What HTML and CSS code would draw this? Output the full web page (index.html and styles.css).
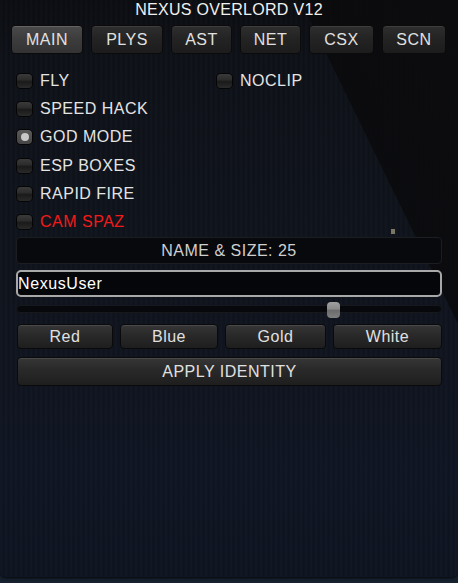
FILE: index.html
```html
<!DOCTYPE html>
<html lang="en">
<head>
    <link rel="stylesheet" href="styles.css">
    <meta charset="UTF-8">
    <meta name="viewport" content="width=device-width, initial-scale=1.0">
    <title>Nexus Overlord V12</title>
</head>
<body>
    <div class="window">
        <div class="title">NEXUS OVERLORD V12</div>

        <div class="tabs">
            <button class="tab active" style="width: 72px">MAIN</button>
            <button class="tab" style="width: 72px">PLYS</button>
            <button class="tab" style="width: 61px">AST</button>
            <button class="tab" style="width: 61px">NET</button>
            <button class="tab" style="width: 65px">CSX</button>
            <button class="tab" style="width: 64px">SCN</button>
        </div>

        <div class="toggles">
            <div class="column">
                <label class="toggle"><span class="box"></span>FLY</label>
                <label class="toggle"><span class="box"></span>SPEED HACK</label>
                <label class="toggle"><span class="box on"></span>GOD MODE</label>
                <label class="toggle"><span class="box"></span>ESP BOXES</label>
                <label class="toggle"><span class="box"></span>RAPID FIRE</label>
                <label class="toggle red"><span class="box"></span>CAM SPAZ</label>
            </div>
            <div class="column">
                <label class="toggle"><span class="box"></span>NOCLIP</label>
            </div>
            <span class="speck"></span>
        </div>

        <div class="panel">
            <div class="label-box">NAME &amp; SIZE: 25</div>
            <input class="field" type="text" value="NexusUser">
            <div class="slider">
                <span class="thumb"></span>
            </div>
            <div class="colors">
                <button class="btn">Red</button>
                <button class="btn">Blue</button>
                <button class="btn">Gold</button>
                <button class="btn">White</button>
            </div>
            <button class="btn apply">APPLY IDENTITY</button>
        </div>
    </div>
</body>
</html>
```

FILE: styles.css
```css
body {
    margin: 0;
    background-color: #16202e;
    font-family: "Liberation Sans", Arial, sans-serif;
    letter-spacing: 0.5px;
    color: #dcdcdc;
    width: 458px;
    height: 583px;
    overflow: hidden;
}

.window {
    height: 577px;
    border-radius: 0 0 6px 6px;
    background-color: #0e1219;
    background-image:
        linear-gradient(64deg, transparent 0%, transparent 78.6%, rgba(10, 10, 12, 0.85) 78.7%, rgba(12, 12, 14, 0.9) 100%),
        repeating-linear-gradient(90deg, rgba(255, 255, 255, 0.012) 0px, rgba(255, 255, 255, 0.012) 2px, rgba(0, 0, 0, 0.05) 3px, transparent 5px),
        linear-gradient(180deg, #0b0d12 0%, #0e1118 10%, #0f131b 40%, #0f1522 80%, #0e1420 100%);
    box-shadow: 0 1px 3px rgba(0, 0, 0, 0.8);
}

.title {
    height: 20px;
    line-height: 20px;
    text-align: center;
    font-size: 16px;
    letter-spacing: 0.3px;
    color: #f0f0f0;
}

.tabs {
    display: flex;
    gap: 8px;
    margin-top: 5px;
    padding-left: 11px;
}

button {
    font-family: "Liberation Sans", Arial, sans-serif;
    font-size: 16px;
    letter-spacing: 0.5px;
    color: #e0e0e0;
    cursor: pointer;
}

.tab {
    height: 29px;
    padding: 0;
    border: 1px solid #0b0b0b;
    border-radius: 4px;
    background: linear-gradient(180deg, #2e2e2e 0%, #242424 45%, #1c1c1c 100%);
    box-shadow: inset 0 1px 0 rgba(255, 255, 255, 0.08);
}

.tab.active {
    background: linear-gradient(180deg, #4a4a4a 0%, #3d3d3d 45%, #333333 100%);
    box-shadow: inset 0 1px 0 rgba(255, 255, 255, 0.15);
}

.toggles {
    position: relative;
    display: flex;
    margin-top: 13px;
    padding-left: 17px;
}

.column {
    width: 200px;
    display: flex;
    flex-direction: column;
}

.toggle {
    height: 28.2px;
    display: flex;
    align-items: center;
    gap: 8px;
    font-size: 16px;
    color: #e4e4e4;
}

.toggle.red {
    color: #f21a1a;
}

.box {
    position: relative;
    width: 15px;
    height: 14px;
    border-radius: 4px;
    background: linear-gradient(180deg, #3a3a3a 0%, #2c2c2c 40%, #1a1a1a 55%, #2a2a2a 100%);
    box-shadow: 0 0 0 1px #050505;
}

.box.on {
    background: linear-gradient(180deg, #5a5a5a 0%, #444 100%);
}

.box.on::after {
    content: "";
    position: absolute;
    left: 4px;
    top: 3px;
    width: 8px;
    height: 8px;
    border-radius: 50%;
    background: #c8c8c8;
}

.speck {
    position: absolute;
    left: 391px;
    top: 162px;
    width: 4px;
    height: 5px;
    background: #7a7664;
}

.panel {
    display: flex;
    flex-direction: column;
    padding: 1px 16px 0 16px;
}

.label-box {
    height: 27px;
    box-sizing: border-box;
    line-height: 25px;
    text-align: center;
    font-size: 16px;
    color: #cfcfcf;
    background-color: #08090c;
    border: 1px solid #1c1d21;
    border-radius: 4px;
}

.field {
    margin-top: 6px;
    height: 27px;
    box-sizing: border-box;
    padding: 0;
    font-family: "Liberation Sans", Arial, sans-serif;
    font-size: 16px;
    letter-spacing: 0.6px;
    color: #ffffff;
    background-color: #04060a;
    border: 2px solid #a8a8a8;
    border-radius: 5px;
    outline: none;
}

.slider {
    position: relative;
    margin-top: 8px;
    height: 8px;
    border-radius: 4px;
    background-color: #07080b;
    border: 1px solid #17181c;
    box-sizing: border-box;
}

.thumb {
    position: absolute;
    left: 310px;
    top: -4px;
    width: 13px;
    height: 16px;
    border-radius: 4px;
    background: linear-gradient(180deg, #a0a0a0 0%, #8a8a8a 45%, #6a6a6a 50%, #808080 100%);
}

.colors {
    display: grid;
    grid-template-columns: 96px 98px 101px 109px;
    gap: 7px;
    margin-top: 11px;
    padding-left: 1px;
}

.btn {
    height: 25px;
    padding: 0;
    border: 1px solid #0a0a0a;
    border-radius: 4px;
    background: linear-gradient(180deg, #363636 0%, #2a2a2a 40%, #1e1e1e 100%);
    box-shadow: inset 0 1px 0 rgba(255, 255, 255, 0.1);
}

.apply {
    margin: 8px 0 0 1px;
    height: 29px;
}
```
